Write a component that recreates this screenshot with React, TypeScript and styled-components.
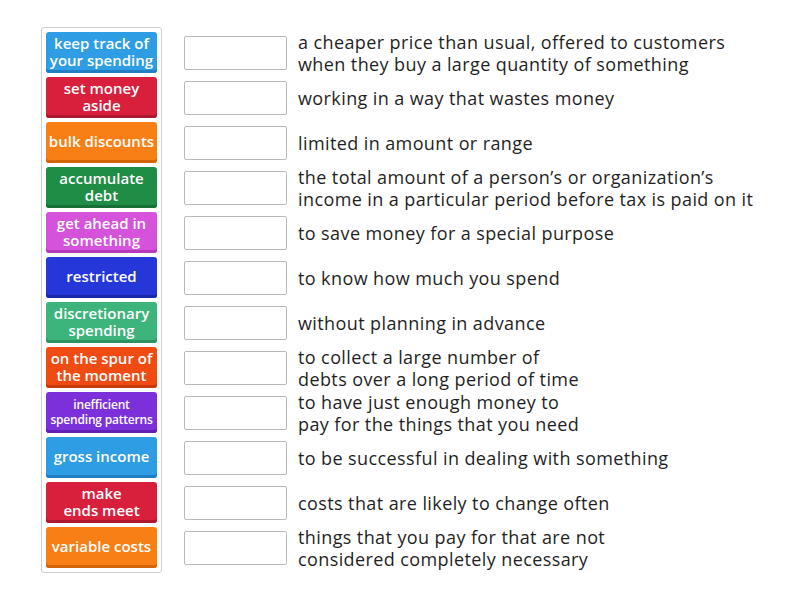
import React from "react";
import styled, { createGlobalStyle } from "styled-components";

const GlobalStyle = createGlobalStyle`
  body {
    margin: 0;
    background: #ffffff;
    font-family: "Open Sans", "Noto Sans", sans-serif;
  }
`;

const Page = styled.div`
  display: flex;
  align-items: flex-start;
  padding: 27px 0 0 41px;
`;

const TilePanel = styled.div`
  display: flex;
  flex-direction: column;
  gap: 4px;
  width: 111px;
  padding: 4px;
  border: 1px solid #cfcfcf;
  border-radius: 3px;
`;

const Tile = styled.div<{ $color: string; $dark: string; $small?: boolean }>`
  height: 41px;
  display: flex;
  align-items: center;
  justify-content: center;
  text-align: center;
  border-radius: 3px;
  background: ${(p) => p.$color};
  box-shadow: inset 0 -3px 0 ${(p) => p.$dark};
  color: #ffffff;
  font-family: "Open Sans", "Noto Sans", sans-serif;
  font-weight: 600;
  font-size: ${(p) => (p.$small ? "12px" : "15px")};
  line-height: ${(p) => (p.$small ? "15px" : "17px")};
  letter-spacing: ${(p) => (p.$small ? "-0.2px" : "0")};
  padding-bottom: 2px;
  box-sizing: border-box;
`;

const Rows = styled.div`
  display: flex;
  flex-direction: column;
  gap: 4px;
  margin-left: 22px;
  padding-top: 5px;
`;

const Row = styled.div`
  height: 41px;
  display: flex;
  align-items: center;
`;

const AnswerBox = styled.div`
  width: 103px;
  height: 34px;
  box-sizing: border-box;
  border: 1px solid #b9b9b9;
  border-radius: 2px;
  background: #ffffff;
  flex-shrink: 0;
`;

const Definition = styled.div`
  margin-left: 11px;
  color: #1f1f1f;
  font-size: 18px;
  letter-spacing: 0.4px;
  line-height: 22px;
  white-space: pre-line;
`;

const TileLabel = styled.span`
  white-space: pre-line;
`;

type TileData = { label: string; color: string; dark: string; small?: boolean };

const tiles: TileData[] = [
  { label: "keep track of\nyour spending", color: "#2e9de4", dark: "#1f7fc2" },
  { label: "set money\naside", color: "#d81f3c", dark: "#ad1a30" },
  { label: "bulk discounts", color: "#f77f16", dark: "#d2650c" },
  { label: "accumulate\ndebt", color: "#1f8d46", dark: "#176f36" },
  { label: "get ahead in\nsomething", color: "#d552db", dark: "#b33ab8" },
  { label: "restricted", color: "#2537d8", dark: "#1a28a8" },
  { label: "discretionary\nspending", color: "#3cb47b", dark: "#2c9262" },
  { label: "on the spur of\nthe moment", color: "#ef4b12", dark: "#c73a0b" },
  { label: "inefficient\nspending patterns", color: "#7c30da", dark: "#6020b4", small: true },
  { label: "gross income", color: "#2e9de4", dark: "#1f7fc2" },
  { label: "make\nends meet", color: "#d81f3c", dark: "#ad1a30" },
  { label: "variable costs", color: "#f77f16", dark: "#d2650c" },
];

const definitions = [
  "a cheaper price than usual, offered to customers\nwhen they buy a large quantity of something",
  "working in a way that wastes money",
  "limited in amount or range",
  "the total amount of a person’s or organization’s\nincome in a particular period before tax is paid on it",
  "to save money for a special purpose",
  "to know how much you spend",
  "without planning in advance",
  "to collect a large number of\ndebts over a long period of time",
  "to have just enough money to\npay for the things that you need",
  "to be successful in dealing with something",
  "costs that are likely to change often",
  "things that you pay for that are not\nconsidered completely necessary",
];

export default function App() {
  return (
    <>
      <GlobalStyle />
      <Page>
        <TilePanel>
          {tiles.map((t) => (
            <Tile key={t.label} $color={t.color} $dark={t.dark} $small={t.small}>
              <TileLabel>{t.label}</TileLabel>
            </Tile>
          ))}
        </TilePanel>
        <Rows>
          {definitions.map((d) => (
            <Row key={d}>
              <AnswerBox />
              <Definition>{d}</Definition>
            </Row>
          ))}
        </Rows>
      </Page>
    </>
  );
}
